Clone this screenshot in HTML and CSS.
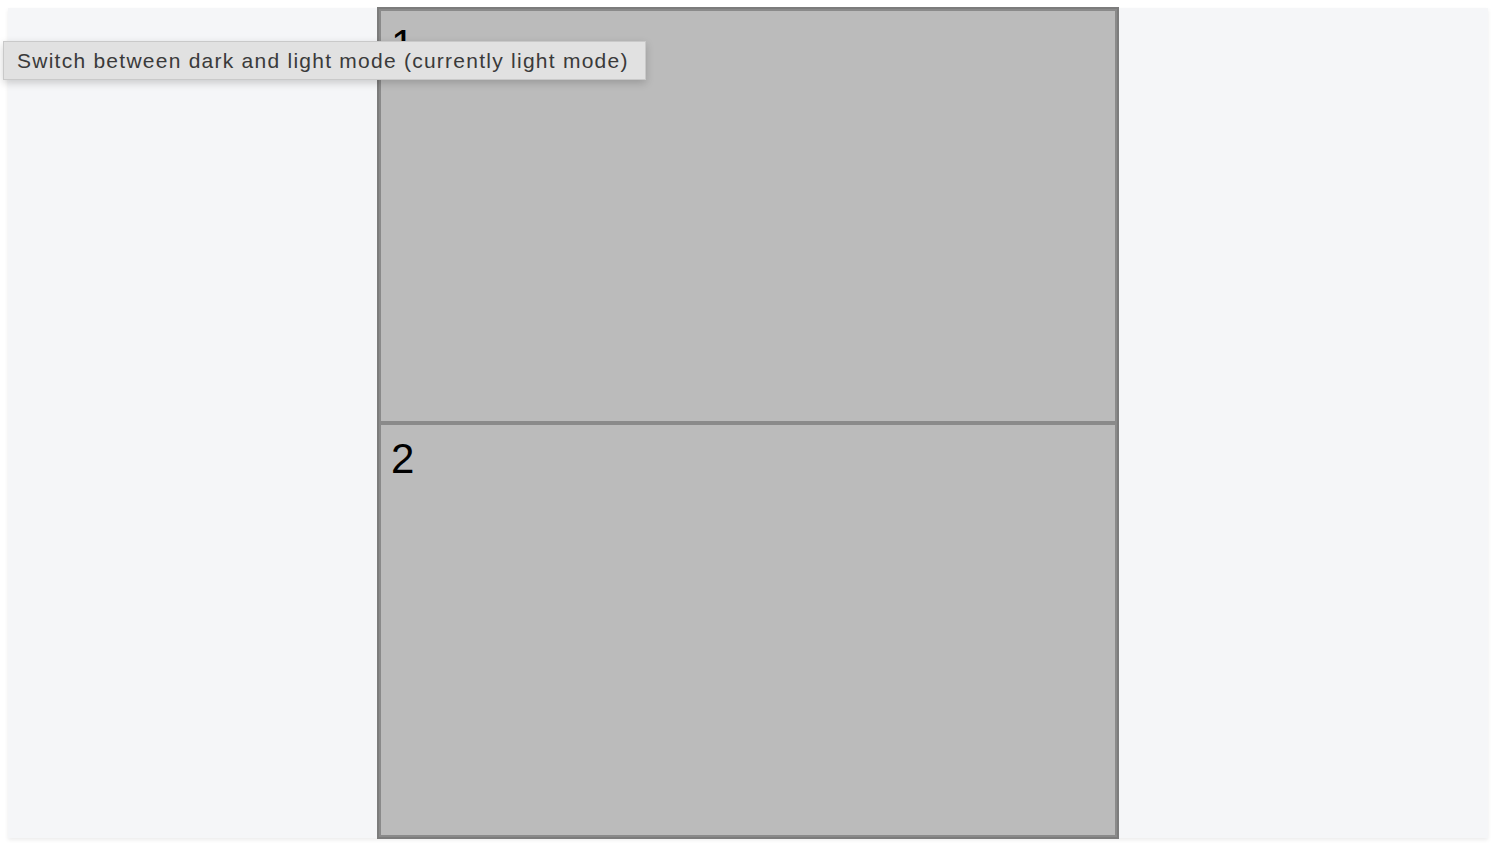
FILE: index.html
```html
<!DOCTYPE html>
<html>
<head>
<meta charset="utf-8">
<link rel="stylesheet" href="styles.css">
</head>
<body>
<div class="panel">
  <div class="stack">
    <div class="cell">1</div>
    <div class="cell">2</div>
  </div>
</div>
<div class="tooltip">Switch between dark and light mode (currently light mode)</div>
</body>
</html>
```
FILE: styles.css
```css
html, body {
  margin: 0;
  padding: 0;
  background: #ffffff;
}
body {
  padding: 8px 15px 12px 8px;
  font-family: "Liberation Sans", Arial, sans-serif;
}
.panel {
  width: 1480px;
  height: 830px;
  background: #f5f6f8;
  box-shadow: 0 2px 4px rgba(0, 0, 0, 0.08);
  display: flex;
  justify-content: center;
}
.stack {
  width: 742px;
  margin-top: -1px;
  height: 832px;
  box-sizing: border-box;
  border: 2px solid #7c7c7c;
  display: flex;
  flex-direction: column;
}
.cell {
  flex: 1;
  background: #bbbbbb;
  border: 2px solid #8a8a8a;
  padding: 10px 10px 6px;
  font-size: 42px;
  color: #000;
  line-height: 48px;
}
.tooltip {
  position: absolute;
  left: 3px;
  top: 41px;
  width: 643px;
  height: 39px;
  box-sizing: border-box;
  background: #e1e1e1;
  border: 1px solid #c9c9c9;
  box-shadow: 0 3px 8px rgba(0, 0, 0, 0.18);
  color: #3a3a3a;
  font-size: 21px;
  letter-spacing: 1.25px;
  line-height: 37px;
  padding-left: 13px;
  white-space: nowrap;
}
```
